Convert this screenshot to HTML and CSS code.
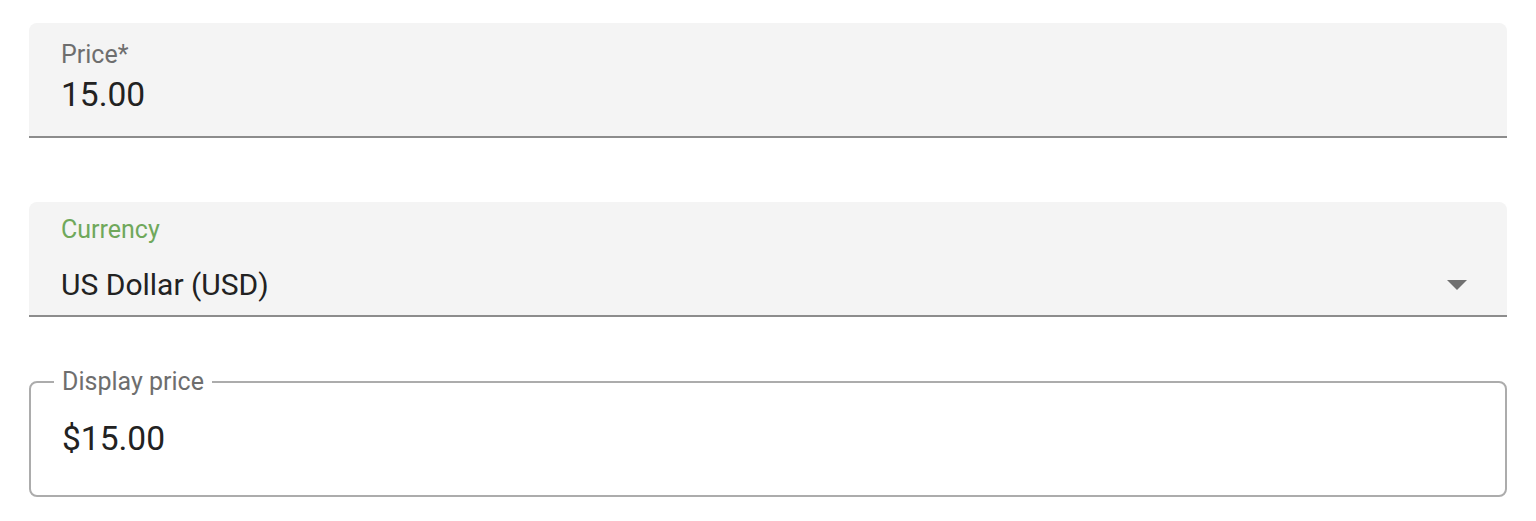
FILE: index.html
```html
<!DOCTYPE html>
<html lang="en">
<head>
<meta charset="utf-8">
<title>Price form</title>
<link rel="stylesheet" href="styles.css">
</head>
<body>
<form class="form">
  <div class="filled price-field">
    <label class="label">Price*</label>
    <div class="value">15.00</div>
  </div>

  <div class="filled currency-field">
    <label class="label label-focus">Currency</label>
    <div class="select-row">
      <div class="select-value">US Dollar (USD)</div>
      <svg class="arrow" width="20" height="10" viewBox="0 0 20 10" aria-hidden="true"><path d="M0 0 L10 10 L20 0 Z" fill="#707070"/></svg>
    </div>
  </div>

  <fieldset class="outlined">
    <legend class="legend">Display price</legend>
    <div class="value outlined-value">$15.00</div>
  </fieldset>
</form>
</body>
</html>
```

FILE: styles.css
```css
html, body {
  margin: 0;
  padding: 0;
  background: #ffffff;
}

body {
  font-family: Roboto, "Liberation Sans", Arial, sans-serif;
  color: #212121;
}

.form {
  display: flex;
  flex-direction: column;
  width: 1478px;
  padding: 23px 0 0 29px;
}

.filled {
  display: flex;
  flex-direction: column;
  background: #f4f4f4;
  border-radius: 8px 8px 0 0;
  border-bottom: 2px solid #8c8c8c;
  padding: 0 40px 0 32px;
}

.price-field {
  padding-top: 16px;
  padding-bottom: 21px;
}

.currency-field {
  margin-top: 64px;
  padding-top: 12px;
  padding-bottom: 10px;
}

.label {
  display: block;
  font-size: 25px;
  line-height: 32px;
  color: #6e6e6e;
}

.label-focus {
  color: #6fa85b;
}

.value {
  font-size: 33.5px;
  line-height: 40px;
  color: #222222;
}

.price-field .value {
  margin-top: 4px;
}

.select-row {
  display: flex;
  align-items: center;
  justify-content: space-between;
  margin-top: 19px;
}

.select-value {
  font-size: 30px;
  line-height: 40px;
  color: #222222;
}

.arrow {
  display: block;
  margin-top: 0;
}

.outlined {
  margin: 49px 0 0 0;
  padding: 0 31px 36px 31px;
  border: 2px solid #acacac;
  border-radius: 8px;
  min-width: 0;
}

.legend {
  font-size: 25px;
  line-height: 32px;
  color: #6e6e6e;
  padding: 0 8px;
  margin-left: -8px;
}

.outlined-value {
  margin-top: 21px;
}
```
